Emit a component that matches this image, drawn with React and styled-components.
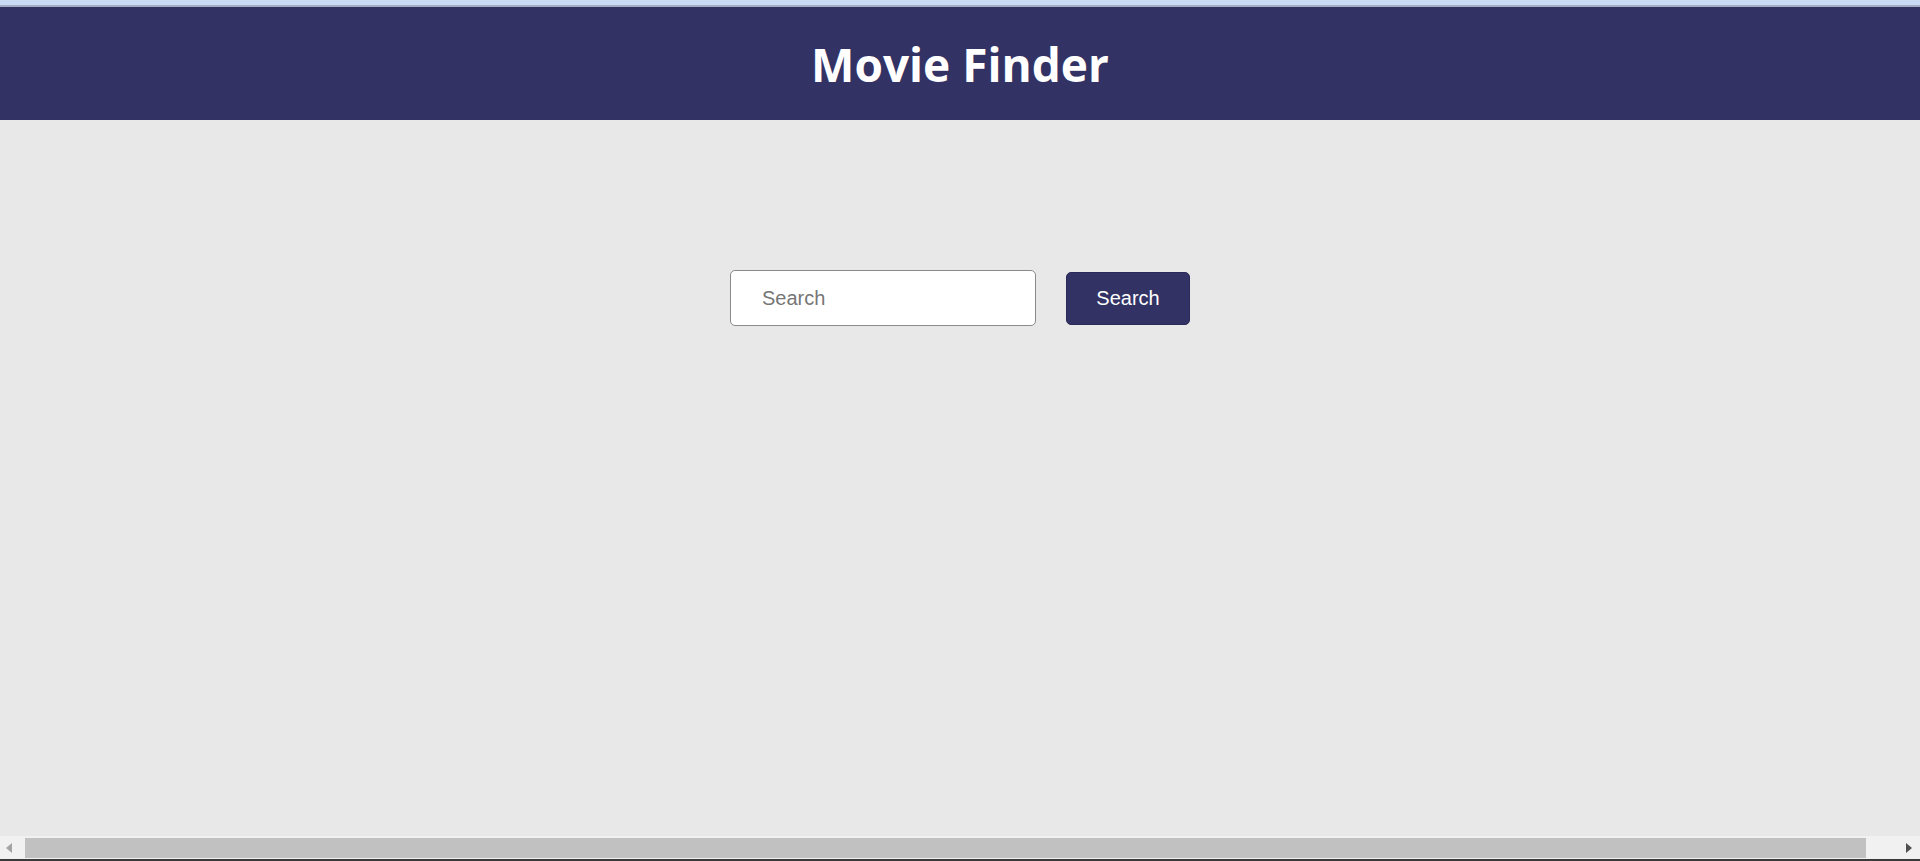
import React, { useState } from "react";
import styled, { createGlobalStyle } from "styled-components";

const GlobalStyle = createGlobalStyle`
  html, body {
    margin: 0;
    padding: 0;
    background: #e8e8e8;
    font-family: "Liberation Sans", Arial, sans-serif;
  }
  #root {
    height: 100vh;
  }
`;

const Page = styled.div`
  height: 100%;
  display: flex;
  flex-direction: column;
  overflow: hidden;
`;

const TopStrip = styled.div`
  height: 5px;
  background: #c9dbf5;
  border-bottom: 2px solid #a3adc4;
  flex-shrink: 0;
`;

const Header = styled.header`
  height: 113px;
  flex-shrink: 0;
  background: #323264;
  display: flex;
  align-items: center;
  justify-content: center;
`;

const Title = styled.h1`
  margin: 0;
  color: #ffffff;
  font-family: "Open Sans", "DejaVu Sans", sans-serif;
  font-weight: 700;
  font-size: 46px;
`;

const Main = styled.main`
  flex: 1;
  display: flex;
  justify-content: center;
  align-items: flex-start;
  padding-top: 150px;
`;

const SearchForm = styled.form`
  display: flex;
  align-items: center;
  gap: 30px;
`;

const SearchInput = styled.input`
  box-sizing: border-box;
  width: 306px;
  height: 56px;
  padding: 0 12px 0 31px;
  border: 1px solid #8a8a8a;
  border-radius: 5px;
  background: #fff;
  font-family: "Liberation Sans", Arial, sans-serif;
  font-size: 20px;
  color: #222;
  outline: none;
  &::placeholder {
    color: #767676;
  }
`;

const SearchButton = styled.button`
  box-sizing: border-box;
  width: 124px;
  height: 53px;
  border: 1px solid #2a2a58;
  border-radius: 5px;
  background: #323264;
  color: #fff;
  font-family: "Liberation Sans", Arial, sans-serif;
  font-size: 20px;
  cursor: pointer;
`;

const ScrollBar = styled.div`
  height: 23px;
  flex-shrink: 0;
  background: #f1f1f1;
  border-bottom: 2px solid #3a3a3a;
  display: flex;
  align-items: center;
  gap: 6px;
  padding: 0 8px 0 6px;
`;

const Arrow = styled.div`
  width: 0;
  height: 0;
  border-top: 5px solid transparent;
  border-bottom: 5px solid transparent;
  ${(p) =>
    p.$dir === "left"
      ? `border-right: 6px solid #a3a3a3;`
      : `border-left: 6px solid #505050;`}
`;

const Thumb = styled.div`
  flex: 1;
  height: 20px;
  margin-left: 7px;
  margin-right: 34px;
  background: #c1c1c1;
`;

export default function App() {
  const [query, setQuery] = useState("");
  return (
    <>
      <GlobalStyle />
      <Page>
        <TopStrip />
        <Header>
          <Title>Movie Finder</Title>
        </Header>
        <Main>
          <SearchForm onSubmit={(e) => e.preventDefault()}>
            <SearchInput
              placeholder="Search"
              value={query}
              onChange={(e) => setQuery(e.target.value)}
            />
            <SearchButton type="submit">Search</SearchButton>
          </SearchForm>
        </Main>
        <ScrollBar>
          <Arrow $dir="left" />
          <Thumb />
          <Arrow $dir="right" />
        </ScrollBar>
      </Page>
    </>
  );
}
